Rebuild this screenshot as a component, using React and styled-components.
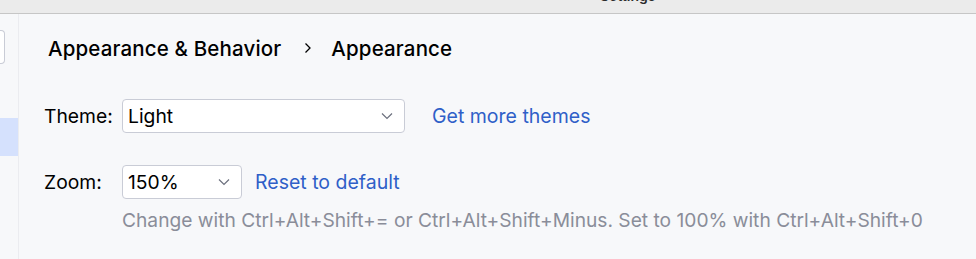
import React from 'react';
import styled, { createGlobalStyle } from 'styled-components';

const GlobalStyle = createGlobalStyle`
  html, body {
    margin: 0;
    padding: 0;
    background: #f7f8fa;
  }
  body {
    font-family: Inter, "Noto Sans", "Liberation Sans", sans-serif;
    color: #000;
    -webkit-font-smoothing: antialiased;
  }
`;

const Window = styled.div`
  width: 976px;
  height: 259px;
  display: flex;
  flex-direction: column;
  overflow: hidden;
  background: #f7f8fa;
`;

const TitleBar = styled.div`
  height: 13px;
  flex: none;
  background: #ebebeb;
  border-bottom: 1px solid #c6c6c6;
  overflow: hidden;
  padding-left: 600px;
`;

const TitleText = styled.div`
  font-size: 14px;
  font-weight: 600;
  line-height: 14px;
  margin-top: -11px;
  color: #2b2b2b;
`;

const Body = styled.div`
  flex: 1;
  display: flex;
`;

const Sidebar = styled.div`
  width: 18px;
  flex: none;
  border-right: 1px solid #ebecf0;
  padding-top: 16px;
  display: flex;
  flex-direction: column;
`;

const SearchStub = styled.div`
  width: 4px;
  height: 32px;
  border: 1px solid #c9ccd6;
  border-left: none;
  border-radius: 0 4px 4px 0;
  background: #fff;
`;

const SelectedItem = styled.div`
  margin-top: 54px;
  height: 38px;
  background: #d5e1fd;
`;

const Main = styled.div`
  flex: 1;
  padding: 22px 0 0 25px;
  display: flex;
  flex-direction: column;
`;

const Breadcrumbs = styled.div`
  display: flex;
  align-items: center;
  height: 24px;
  padding-left: 4px;
  font-size: 20.5px;
  font-weight: 500;
  letter-spacing: 0.15px;
`;

const Crumb = styled.span``;

const Separator = styled.svg`
  margin: 0 19px 0 23px;
`;

const Row = styled.div`
  display: flex;
  align-items: center;
  height: 34px;
  margin-top: ${p => p.$top}px;
`;

const Label = styled.div`
  width: 78px;
  flex: none;
  font-size: 19.3px;
`;

const Combo = styled.div`
  box-sizing: border-box;
  width: ${p => p.$width}px;
  height: 34px;
  border: 1px solid #c9ccd6;
  border-radius: 4px;
  background: #fff;
  display: flex;
  align-items: center;
  justify-content: space-between;
  padding: 0 11px 0 5px;
  font-size: 19.3px;
`;

const Link = styled.a`
  color: #2f5fc8;
  font-size: 19.5px;
  margin-left: ${p => p.$gap}px;
  text-decoration: none;
  cursor: pointer;
`;

const Hint = styled.div`
  margin: 9px 0 0 78px;
  font-size: 19.2px;
  line-height: 24px;
  color: #8a8d99;
`;

const Chevron = () => (
  <svg width="12" height="8" viewBox="0 0 12 8">
    <path d="M1 1.5 L6 6.5 L11 1.5" fill="none" stroke="#6c707e" strokeWidth="1.2" />
  </svg>
);

const ComboBox = ({ value, width }) => (
  <Combo $width={width}>
    <span>{value}</span>
    <Chevron />
  </Combo>
);

export default function App() {
  return (
    <Window>
      <GlobalStyle />
      <TitleBar>
        <TitleText>Settings</TitleText>
      </TitleBar>
      <Body>
        <Sidebar>
          <SearchStub />
          <SelectedItem />
        </Sidebar>
        <Main>
          <Breadcrumbs>
            <Crumb>Appearance &amp; Behavior</Crumb>
            <Separator width="8" height="12" viewBox="0 0 8 12">
              <path d="M1.5 1.5 L6 6 L1.5 10.5" fill="none" stroke="#000" strokeWidth="1.3" />
            </Separator>
            <Crumb>Appearance</Crumb>
          </Breadcrumbs>
          <Row $top={39}>
            <Label>Theme:</Label>
            <ComboBox value="Light" width={283} />
            <Link $gap={27}>Get more themes</Link>
          </Row>
          <Row $top={32}>
            <Label>Zoom:</Label>
            <ComboBox value="150%" width={120} />
            <Link $gap={13}>Reset to default</Link>
          </Row>
          <Hint>
            Change with Ctrl+Alt+Shift+= or Ctrl+Alt+Shift+Minus. Set to 100% with Ctrl+Alt+Shift+0
          </Hint>
        </Main>
      </Body>
    </Window>
  );
}
